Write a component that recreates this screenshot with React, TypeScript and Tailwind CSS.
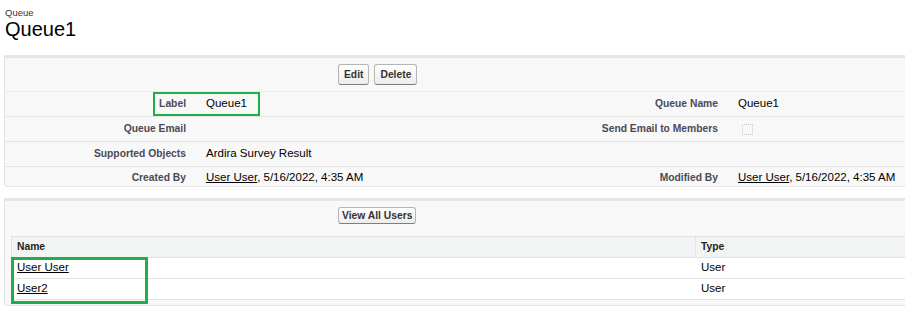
import React from 'react';

const font = { fontFamily: '"Liberation Sans", Arial, sans-serif' };

const Btn = ({ children, h = 'h-[21px]', px = 'px-[5px]' }: { children: React.ReactNode; h?: string; px?: string }) => (
    <button
        className={`${h} ${px} rounded-[3px] border border-[#b5b5b5] border-b-[#7f7f7f] bg-gradient-to-b from-white to-[#ededed] text-[10.3px] font-bold text-[#333] whitespace-nowrap`}
    >
        {children}
    </button>
);

const Label = ({ children }: { children?: React.ReactNode }) => (
    <div className="flex justify-end pr-[10px] text-[10.3px] font-bold text-[#4a4a56] whitespace-nowrap">{children}</div>
);

const Value = ({ children }: { children?: React.ReactNode }) => (
    <div className="pl-[10px] text-[11.5px] text-black whitespace-nowrap">{children}</div>
);

const Row = ({ cells, last, box }: { cells: React.ReactNode[]; last?: boolean; box?: boolean }) => (
    <div
        className={`relative grid grid-cols-[191px_410px_122px_1fr] items-center ${last ? 'h-[22px]' : 'h-[25px] border-b border-[#e3e3e3]'}`}
    >
        {cells}
        {box && <div className="absolute left-[148px] top-0 w-[107px] h-[24px] border-[2.5px] border-[#1fae4b]" />}
    </div>
);

export default function App() {
    return (
        <div className="w-[905px] h-[313px] bg-white overflow-hidden" style={font}>
            <div className="pl-[5px] pt-[7px]">
                <div className="text-[9.5px] leading-[11px] text-[#333]">Queue</div>
                <div className="text-[20px] leading-[22px] text-black">Queue1</div>
            </div>

            {/* detail panel */}
            <div className="ml-[4px] mt-[15px] border-t-[3px] border-[#767d98] bg-[#f8f8f8] border-l border-b border-[#e6e6e6] rounded-bl-[4px] h-[132px]">
                <div className="h-[34px] flex items-center gap-[5px] pl-[333px] border-b border-[#ececec]">
                    <Btn>Edit</Btn>
                    <Btn>Delete</Btn>
                </div>
                <Row
                    box
                    cells={[
                        <Label key="a">Label</Label>,
                        <Value key="b">Queue1</Value>,
                        <Label key="c">Queue Name</Label>,
                        <Value key="d">Queue1</Value>,
                    ]}
                />
                <Row
                    cells={[
                        <Label key="a">Queue Email</Label>,
                        <Value key="b" />,
                        <Label key="c">Send Email to Members</Label>,
                        <Value key="d">
                            <div className="ml-[4px] w-[11px] h-[11px] border border-dotted border-[#c8c8c8]" />
                        </Value>,
                    ]}
                />
                <Row
                    cells={[
                        <Label key="a">Supported Objects</Label>,
                        <Value key="b">Ardira Survey Result</Value>,
                        <Label key="c" />,
                        <Value key="d" />,
                    ]}
                />
                <Row
                    last
                    cells={[
                        <Label key="a">Created By</Label>,
                        <Value key="b">
                            <span className="underline">User User</span>, 5/16/2022, 4:35 AM
                        </Value>,
                        <Label key="c">Modified By</Label>,
                        <Value key="d">
                            <span className="underline">User User</span>, 5/16/2022, 4:35 AM
                        </Value>,
                    ]}
                />
            </div>

            {/* users panel */}
            <div className="ml-[4px] mt-[11px] border-t-[3px] border-[#767d98] bg-[#f8f8f8] border-l border-b border-[#e6e6e6] rounded-bl-[4px] h-[108px] pl-[6px]">
                <div className="h-[35px] flex pl-[327px] pt-[6px]">
                    <Btn h="h-[17px]" px="px-[3px]">View All Users</Btn>
                </div>
                <div className="bg-white border-t border-l border-[#e0e3e5]">
                    <div className="grid grid-cols-[684px_1fr] h-[21px] bg-[#f2f3f3] border-b border-[#e0e3e5] text-[10.3px] font-bold text-[#222]">
                        <div className="pl-[5px] flex items-center border-r border-[#e0e3e5]">Name</div>
                        <div className="pl-[5px] flex items-center">Type</div>
                    </div>
                    <div className="relative">
                        {['User User', 'User2'].map((n) => (
                            <div key={n} className="grid grid-cols-[684px_1fr] h-[21px] border-b border-[#e3e3e3] text-[11.5px] text-black">
                                <div className="pl-[5px] flex items-center">
                                    <span className="underline">{n}</span>
                                </div>
                                <div className="pl-[5px] flex items-center">User</div>
                            </div>
                        ))}
                        <div className="absolute left-[-1px] top-[-1px] w-[137px] h-[47px] border-[3px] border-[#1fae4b]" />
                    </div>
                </div>
            </div>
        </div>
    );
}
